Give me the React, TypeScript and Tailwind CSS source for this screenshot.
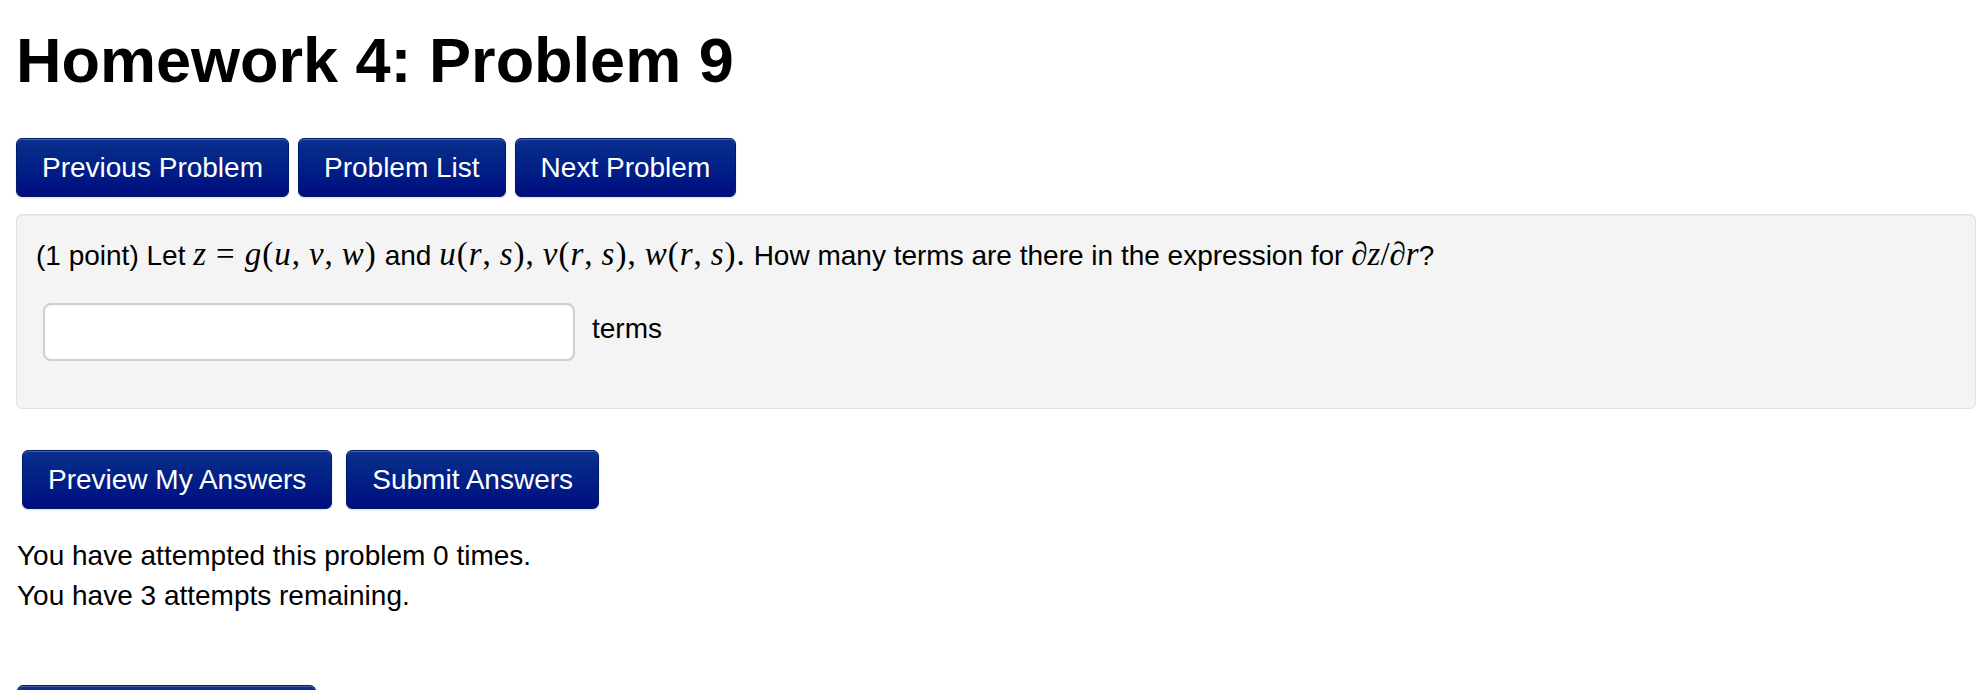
import { ReactNode } from "react";

function NavButton({ children }: { children: ReactNode }) {
  return (
    <button className="inline-flex h-[59px] items-center rounded-[6px] border border-[#001a6e] bg-gradient-to-b from-[#0b2f8c] to-[#000b80] px-[25px] text-[28px] text-white shadow-[inset_0_1px_0_rgba(255,255,255,0.25),0_1px_2px_rgba(0,0,0,0.15)]">
      {children}
    </button>
  );
}

// small helpers for the math bits, rendered with a serif italic like MathJax
function V({ children }: { children: ReactNode }) {
  return <i className="font-['Liberation_Serif',serif]">{children}</i>;
}

function M({ children }: { children: ReactNode }) {
  return (
    <span className="font-['Liberation_Serif',serif] text-[33px] leading-[40px] tracking-[1px] not-italic">
      {children}
    </span>
  );
}

function Comma() {
  return <span className="mr-[8px]">,</span>;
}

function Args({ a, b }: { a: string; b: string }) {
  return (
    <>
      (<V>{a}</V>
      <Comma />
      <V>{b}</V>)
    </>
  );
}

export default function App() {
  return (
    <div className="min-h-screen bg-white pl-[16px] pr-[6px] font-['Liberation_Sans',Arial,sans-serif] text-[28px] leading-[40px] text-black">
      <h1 className="pt-[26px] text-[63px] font-bold leading-[69px]">
        Homework 4: Problem 9
      </h1>

      <div className="mt-[43px] flex gap-[9px]">
        <NavButton>Previous Problem</NavButton>
        <NavButton>Problem List</NavButton>
        <NavButton>Next Problem</NavButton>
      </div>

      <div className="mt-[17px] h-[195px] rounded-[6px] border border-[#e0e0e0] bg-[#f4f4f4] px-[19px] pt-[19px] shadow-[inset_0_1px_1px_rgba(0,0,0,0.05)]">
        <p className="h-[40px]">
          (1 point) Let{" "}
          <M>
            <V>z</V>
            <span className="mx-[9px]">=</span>
            <V>g</V>(<V>u</V>
            <Comma />
            <V>v</V>
            <Comma />
            <V>w</V>)
          </M>{" "}
          and{" "}
          <M>
            <V>u</V>
            <Args a="r" b="s" />
            <Comma />
            <V>v</V>
            <Args a="r" b="s" />
            <Comma />
            <V>w</V>
            <Args a="r" b="s" />.
          </M>{" "}
          How many terms are there in the expression for{" "}
          <span className="font-['Liberation_Serif',serif] text-[33px] leading-[40px]">
            <V>∂z</V>/<V>∂r</V>
          </span>
          ?
        </p>
        <div className="mt-[29px] flex items-center gap-[17px] pl-[7px]">
          <input
            type="text"
            className="h-[58px] w-[532px] rounded-[8px] border-2 border-[#cfcfcf] bg-white px-3 shadow-[inset_0_1px_1px_rgba(0,0,0,0.05)] outline-none"
          />
          <span className="-mt-[6px]">terms</span>
        </div>
      </div>

      <div className="mt-[41px] ml-[6px] flex gap-[14px]">
        <NavButton>Preview My Answers</NavButton>
        <NavButton>Submit Answers</NavButton>
      </div>

      <div className="mt-[27px] ml-[1px]">
        <p>You have attempted this problem 0 times.</p>
        <p>You have 3 attempts remaining.</p>
      </div>

      <div className="mt-[69px] ml-[1px]">
        <NavButton>Show Past Answers</NavButton>
      </div>
    </div>
  );
}
